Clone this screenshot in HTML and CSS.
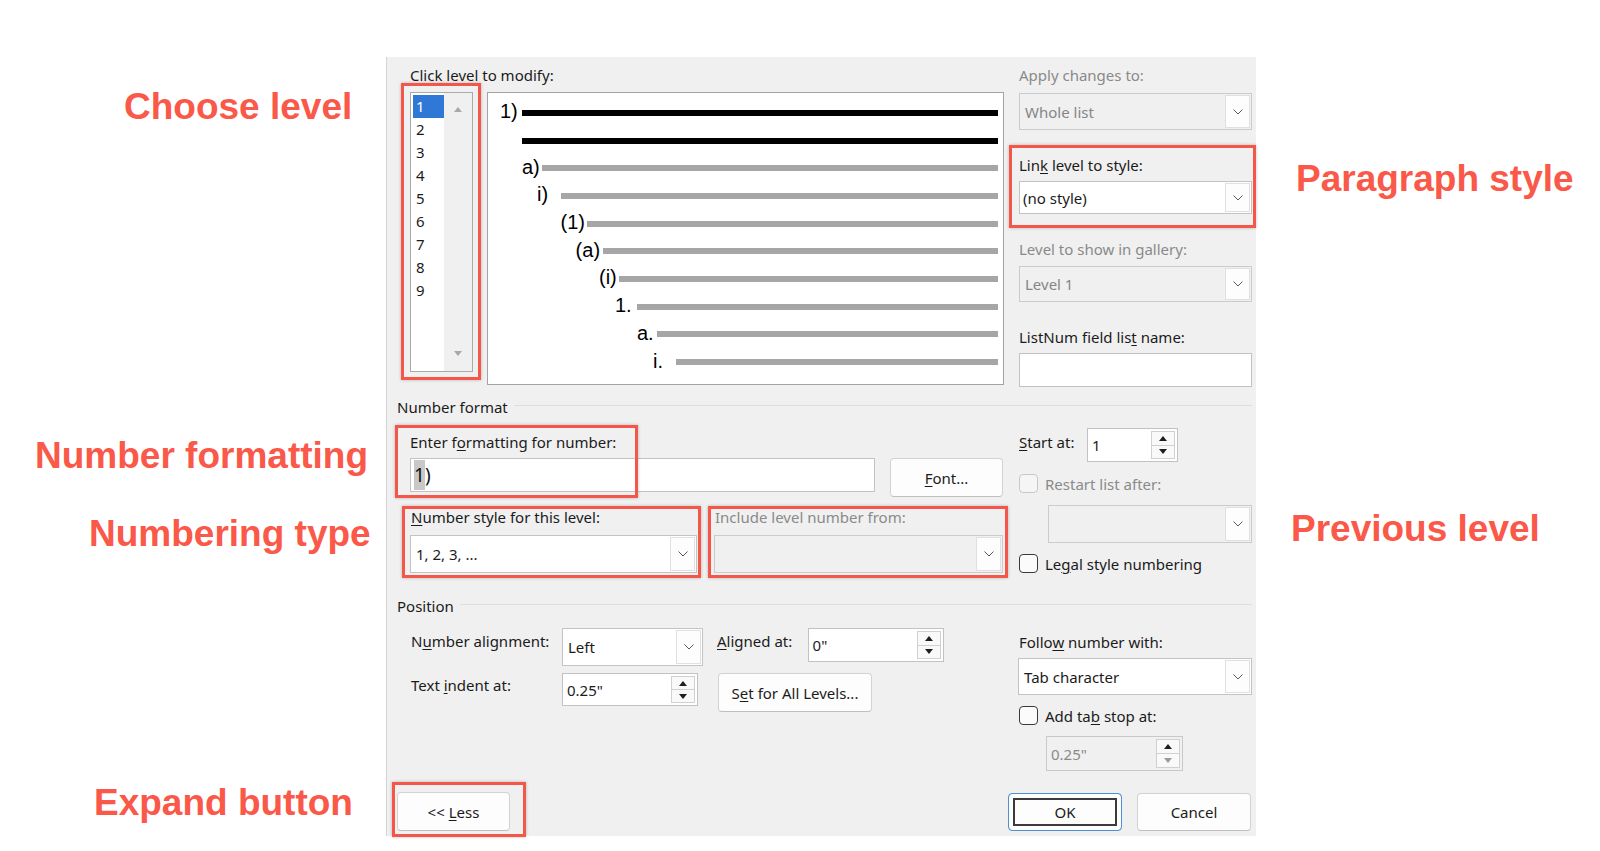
FILE: index.html
```html
<!DOCTYPE html>
<html lang="en">
<head>
<meta charset="utf-8">
<title>Define new Multilevel list</title>
<link rel="stylesheet" href="styles.css">
</head>
<body>
<div class="page">
  <div class="notes notes-left">
    <div class="note n-choose">Choose level</div>
    <div class="note n-format">Number formatting</div>
    <div class="note n-type">Numbering type</div>
    <div class="note n-expand">Expand button</div>
  </div>

  <div class="dialog">
    <section class="sec sec-top">
      <div class="col-left">
        <div class="lbl">Click le<u>v</u>el to modify:</div>
        <div class="top-row">
          <div class="levels">
            <ul class="level-items">
              <li class="sel">1</li><li>2</li><li>3</li><li>4</li><li>5</li><li>6</li><li>7</li><li>8</li><li>9</li>
            </ul>
            <div class="level-scroll">
              <svg class="tri" width="8" height="5" viewBox="0 0 8 5"><path d="M0 5 L4 0 L8 5Z" fill="#a8a8a8"/></svg>
              <svg class="tri" width="8" height="5" viewBox="0 0 8 5"><path d="M0 0 L8 0 L4 5Z" fill="#a8a8a8"/></svg>
            </div>
          </div>
          <div class="preview">
            <div class="pv-row lv0"><span class="pv-num">1)</span><span class="bar dark"></span></div>
            <div class="pv-row lv0b"><span class="bar dark"></span></div>
            <div class="pv-row lv1"><span class="pv-num">a)</span><span class="bar"></span></div>
            <div class="pv-row lv2"><span class="pv-num">i)</span><span class="bar"></span></div>
            <div class="pv-row lv3"><span class="pv-num">(1)</span><span class="bar"></span></div>
            <div class="pv-row lv4"><span class="pv-num">(a)</span><span class="bar"></span></div>
            <div class="pv-row lv5"><span class="pv-num">(i)</span><span class="bar"></span></div>
            <div class="pv-row lv6"><span class="pv-num">1.</span><span class="bar"></span></div>
            <div class="pv-row lv7"><span class="pv-num">a.</span><span class="bar"></span></div>
            <div class="pv-row lv8"><span class="pv-num">i.</span><span class="bar"></span></div>
          </div>
        </div>
      </div>
      <div class="col-right">
        <div class="lbl dis">Apply changes to:</div>
        <div class="combo disabled c-apply"><span class="val">Whole list</span><span class="drop"><svg width="10" height="6" viewBox="0 0 10 6"><path d="M0.5 0.5 L5 5 L9.5 0.5" fill="none" stroke="#5a5a5a" stroke-width="1"/></svg></span></div>
        <div class="lbl gap25">Lin<u>k</u> level to style:</div>
        <div class="combo c-link"><span class="val tight">(no style)</span><span class="drop"><svg width="10" height="6" viewBox="0 0 10 6"><path d="M0.5 0.5 L5 5 L9.5 0.5" fill="none" stroke="#5a5a5a" stroke-width="1"/></svg></span></div>
        <div class="lbl dis gap25">Level to show in gallery:</div>
        <div class="combo disabled c-gallery"><span class="val">Level 1</span><span class="drop"><svg width="10" height="6" viewBox="0 0 10 6"><path d="M0.5 0.5 L5 5 L9.5 0.5" fill="none" stroke="#5a5a5a" stroke-width="1"/></svg></span></div>
        <div class="lbl gap25">ListNum field lis<u>t</u> name:</div>
        <div class="textbox tb-listnum"></div>
      </div>
    </section>

    <div class="group-head">Number format</div>

    <section class="sec sec-num">
      <div class="col-left">
        <div class="lbl mt15">Enter f<u>o</u>rmatting for number:</div>
        <div class="fmt-row">
          <div class="textbox tb-format"><span class="selhl">1</span>)</div>
          <div class="btn btn-font"><span><u>F</u>ont...</span></div>
        </div>
        <div class="style-grid">
          <div class="lbl"><u>N</u>umber style for this level:</div>
          <div class="lbl dis">Include level number from:</div>
          <div class="combo c-style"><span class="val">1, 2, 3, ...</span><span class="drop"><svg width="10" height="6" viewBox="0 0 10 6"><path d="M0.5 0.5 L5 5 L9.5 0.5" fill="none" stroke="#5a5a5a" stroke-width="1"/></svg></span></div>
          <div class="combo disabled c-include"><span class="val"></span><span class="drop"><svg width="10" height="6" viewBox="0 0 10 6"><path d="M0.5 0.5 L5 5 L9.5 0.5" fill="none" stroke="#5a5a5a" stroke-width="1"/></svg></span></div>
        </div>
      </div>
      <div class="col-right">
        <div class="start-row">
          <div class="lbl start-lbl"><u>S</u>tart at:</div>
          <div class="spin sp-start">
            <span class="sv">1</span>
            <span class="sb"><span class="sb-up"><svg width="8" height="5" viewBox="0 0 8 5"><path d="M0 5 L4 0 L8 5Z" fill="#1e1e1e"/></svg></span><span class="sb-dn"><svg width="8" height="5" viewBox="0 0 8 5"><path d="M0 0 L8 0 L4 5Z" fill="#1e1e1e"/></svg></span></span>
          </div>
        </div>
        <div class="chk-row mt12"><span class="cb dis"></span><span class="chk-text dis">Restart list after:</span></div>
        <div class="combo disabled c-restart"><span class="val"></span><span class="drop"><svg width="10" height="6" viewBox="0 0 10 6"><path d="M0.5 0.5 L5 5 L9.5 0.5" fill="none" stroke="#5a5a5a" stroke-width="1"/></svg></span></div>
        <div class="chk-row mt11"><span class="cb"></span><span class="chk-text">Le<u>g</u>al style numbering</span></div>
      </div>
    </section>

    <div class="group-head">Position</div>

    <section class="sec sec-pos">
      <div class="col-left">
        <div class="pos-row1">
          <div class="lbl pos-lbl">N<u>u</u>mber alignment:</div>
          <div class="combo c-align"><span class="val">Left</span><span class="drop"><svg width="10" height="6" viewBox="0 0 10 6"><path d="M0.5 0.5 L5 5 L9.5 0.5" fill="none" stroke="#5a5a5a" stroke-width="1"/></svg></span></div>
          <div class="lbl aligned-lbl"><u>A</u>ligned at:</div>
          <div class="spin sp-aligned">
            <span class="sv">0"</span>
            <span class="sb"><span class="sb-up"><svg width="8" height="5" viewBox="0 0 8 5"><path d="M0 5 L4 0 L8 5Z" fill="#1e1e1e"/></svg></span><span class="sb-dn"><svg width="8" height="5" viewBox="0 0 8 5"><path d="M0 0 L8 0 L4 5Z" fill="#1e1e1e"/></svg></span></span>
          </div>
        </div>
        <div class="pos-row2">
          <div class="lbl pos-lbl2">Text <u>i</u>ndent at:</div>
          <div class="spin sp-indent">
            <span class="sv">0.25"</span>
            <span class="sb"><span class="sb-up"><svg width="8" height="5" viewBox="0 0 8 5"><path d="M0 5 L4 0 L8 5Z" fill="#1e1e1e"/></svg></span><span class="sb-dn"><svg width="8" height="5" viewBox="0 0 8 5"><path d="M0 0 L8 0 L4 5Z" fill="#1e1e1e"/></svg></span></span>
          </div>
          <div class="btn btn-setall"><span>S<u>e</u>t for All Levels...</span></div>
        </div>
      </div>
      <div class="col-right">
        <div class="lbl mt16">Follo<u>w</u> number with:</div>
        <div class="combo c-follow"><span class="val">Tab character</span><span class="drop"><svg width="10" height="6" viewBox="0 0 10 6"><path d="M0.5 0.5 L5 5 L9.5 0.5" fill="none" stroke="#5a5a5a" stroke-width="1"/></svg></span></div>
        <div class="chk-row mt11"><span class="cb"></span><span class="chk-text">Add ta<u>b</u> stop at:</span></div>
        <div class="spin disabled sp-tab">
          <span class="sv">0.25"</span>
          <span class="sb"><span class="sb-up"><svg width="8" height="5" viewBox="0 0 8 5"><path d="M0 5 L4 0 L8 5Z" fill="#1e1e1e"/></svg></span><span class="sb-dn"><svg width="8" height="5" viewBox="0 0 8 5"><path d="M0 0 L8 0 L4 5Z" fill="#9a9a9a"/></svg></span></span>
        </div>
      </div>
    </section>

    <section class="sec sec-btns">
      <div class="btn btn-less"><span>&lt;&lt; <u>L</u>ess</span></div>
      <div class="spacer"></div>
      <div class="btn btn-ok"><span>OK</span></div>
      <div class="btn btn-cancel"><span>Cancel</span></div>
    </section>
  </div>

  <div class="notes notes-right">
    <div class="note n-para">Paragraph style</div>
    <div class="note n-prev">Previous level</div>
  </div>

  <div class="callout co-levels"></div>
  <div class="callout co-link"></div>
  <div class="callout co-format"></div>
  <div class="callout co-style"></div>
  <div class="callout co-include"></div>
  <div class="callout co-less"></div>
</div>
</body>
</html>
```

FILE: styles.css
```css
* { box-sizing: border-box; }
html, body { margin: 0; padding: 0; background: #ffffff; }
body {
  width: 1600px;
  height: 851px;
  overflow: hidden;
  font-family: "Noto Sans", "Segoe UI", sans-serif;
  font-size: 15px;
  color: #1b1b1b;
}
u { text-decoration-thickness: 1px; text-underline-offset: 2px; }

.page { position: relative; display: flex; width: 1600px; height: 851px; }

/* annotations */
.notes {
  display: flex;
  flex-direction: column;
  font-family: "Liberation Sans", Arial, sans-serif;
  font-weight: bold;
  font-size: 37px;
  line-height: 40px;
  color: #fa5848;
  white-space: nowrap;
}
.notes-left { width: 386px; flex: none; }
.notes-right { flex: 1; }
.n-choose { margin: 87px 0 0 124px; }
.n-format { margin: 309px 0 0 35px; }
.n-type { margin: 38px 0 0 89px; }
.n-expand { margin: 229px 0 0 94px; }
.n-para { margin: 159px 0 0 40px; }
.n-prev { margin: 310px 0 0 35px; }

.callout {
  position: absolute;
  border: 3px solid #f4564a;
  box-shadow: 0 0 3px rgba(0, 0, 0, 0.25);
  pointer-events: none;
}
.co-levels { left: 401px; top: 83px; width: 80px; height: 297px; }
.co-link { left: 1009px; top: 145px; width: 247px; height: 83px; }
.co-format { left: 395px; top: 425px; width: 243px; height: 73px; }
.co-style { left: 402px; top: 506px; width: 299px; height: 72px; }
.co-include { left: 708px; top: 506px; width: 300px; height: 72px; }
.co-less { left: 392px; top: 782px; width: 134px; height: 55px; }

/* dialog */
.dialog {
  flex: none;
  width: 870px;
  height: 779px;
  margin-top: 57px;
  background: #f0f0f0;
  box-shadow: inset 1px 0 0 #d4d4d4;
  display: flex;
  flex-direction: column;
}
.sec { display: flex; flex: none; }
.col-left { width: 618px; flex: none; padding-left: 24px; }
.col-right { width: 233px; margin-left: 15px; flex: none; display: flex; flex-direction: column; }

.lbl { height: 20px; line-height: 20px; white-space: nowrap; }
.dis { color: #8a8a8a; }
.gap25 { margin-top: 25px; }
.mt15 { margin-top: 15px; }
.mt16 { margin-top: 16px; }
.mt12 { margin-top: 12px; }
.mt11 { margin-top: 11px; }

.sec-top { height: 340px; padding-top: 8px; }
.top-row { display: flex; align-items: flex-start; gap: 14px; margin-top: 7px; }

.levels {
  width: 63px;
  height: 280px;
  flex: none;
  display: flex;
  background: #ffffff;
  border: 1px solid #a9a9a9;
}
.level-items {
  list-style: none;
  margin: 2px 0 0 2px;
  padding: 0;
  width: 30.5px;
}
.level-items li { height: 23px; line-height: 23px; padding-left: 3px; color: #1b1b1b; }
.level-items li.sel { background: #2f78d6; color: #ffffff; }
.level-scroll {
  flex: 1;
  background: #f0f0f0;
  display: flex;
  flex-direction: column;
  align-items: center;
  justify-content: space-between;
  padding: 14px 0 15px 0;
}

.preview {
  width: 517px;
  height: 293px;
  flex: none;
  background: #ffffff;
  border: 1px solid #a3a3a3;
  padding: 6px 5px 0 0;
}
.pv-row { display: flex; align-items: center; height: 27.7px; }
.pv-num {
  flex: none;
  font-family: "Liberation Sans", Arial, sans-serif;
  font-size: 20px;
  line-height: 20px;
  color: #000;
  white-space: nowrap;
  margin-top: -3px;
}
.bar { flex: 1; height: 6px; background: #a6a6a6; }
.bar.dark { background: #000000; }
.lv0 { padding-left: 12px; } .lv0 .pv-num { width: 22px; }
.lv0b { padding-left: 34px; }
.lv1 { padding-left: 34px; } .lv1 .pv-num { width: 20px; }
.lv2 { padding-left: 49px; } .lv2 .pv-num { width: 23.5px; }
.lv3 { padding-left: 72.5px; } .lv3 .pv-num { width: 26.5px; }
.lv4 { padding-left: 87.6px; } .lv4 .pv-num { width: 27.4px; }
.lv5 { padding-left: 111px; } .lv5 .pv-num { width: 20px; }
.lv6 { padding-left: 127px; } .lv6 .pv-num { width: 22px; }
.lv7 { padding-left: 149px; } .lv7 .pv-num { width: 20px; }
.lv8 { padding-left: 165px; } .lv8 .pv-num { width: 23px; }

/* controls */
.combo {
  display: flex;
  background: #ffffff;
  border: 1px solid #c3c3c3;
  flex: none;
}
.combo .val {
  flex: 1;
  display: flex;
  align-items: center;
  padding-left: 5px;
  white-space: nowrap;
  color: #1b1b1b;
}
.combo .val.tight { padding-left: 3px; }
.combo .drop {
  width: 25px;
  margin: 1px 1px 1px 0;
  display: flex;
  align-items: center;
  justify-content: center;
  background: #fdfdfd;
  border: 1px solid #e0e0e0;
}
.combo.disabled { background: #f0f0f0; border-color: #cbcbcb; }
.combo.disabled .val { color: #868686; }

.c-apply { height: 37px; margin-top: 8px; }
.c-link { height: 33px; margin-top: 6px; }
.c-gallery { height: 36px; margin-top: 7px; }
.textbox { background: #ffffff; border: 1px solid #c2c2c2; flex: none; }
.tb-listnum { height: 34px; margin-top: 6px; }

.group-head {
  display: flex;
  align-items: center;
  height: 20px;
  padding-left: 11px;
  flex: none;
  white-space: nowrap;
}
.group-head::after {
  content: "";
  flex: 1;
  height: 1px;
  background: #dddddd;
  margin: -3px 4px 0 6px;
}

.sec-num { height: 179px; }
.fmt-row { display: flex; align-items: flex-start; margin-top: 6px; }
.tb-format {
  width: 465px;
  height: 34px;
  padding: 1px 0 0 3px;
  font-size: 19px;
  line-height: 30px;
  color: #111;
}
.selhl { background: #c8c8c8; display: inline-block; height: 30px; }
.btn {
  display: flex;
  align-items: center;
  justify-content: center;
  background: #fdfdfd;
  border: 1px solid #d2d2d2;
  border-bottom-color: #bfbfbf;
  border-radius: 4px;
  white-space: nowrap;
  color: #1b1b1b;
  flex: none;
}
.btn-font { width: 113px; height: 39px; margin-left: 15px; }

.style-grid {
  display: grid;
  grid-template-columns: 287px 289px;
  column-gap: 17px;
  row-gap: 8px;
  margin-top: 10px;
}
.style-grid .lbl { padding-left: 1px; }
.c-style, .c-include { height: 38px; }

.start-row { display: flex; align-items: flex-start; margin-top: 11px; }
.start-lbl { width: 68px; margin-top: 4px; }
.spin {
  display: flex;
  background: #ffffff;
  border: 1px solid #c2c2c2;
  flex: none;
}
.spin .sv { flex: 1; display: flex; align-items: center; padding-left: 4px; white-space: nowrap; }
.spin .sb {
  width: 24px;
  margin: 2px 2px 2px 0;
  display: flex;
  flex-direction: column;
  border: 1px solid #d0d0d0;
}
.spin .sb > span {
  flex: 1;
  display: flex;
  align-items: center;
  justify-content: center;
  background: #f9f9f9;
}
.spin .sb .sb-up { border-bottom: 1px solid #d0d0d0; }
.spin.disabled { background: #f0f0f0; border-color: #c9c9c9; }
.spin.disabled .sv { color: #8a8a8a; }
.sp-start { width: 91px; height: 34px; }

.chk-row { display: flex; align-items: center; height: 19px; }
.cb {
  width: 19px;
  height: 19px;
  flex: none;
  border: 1px solid #3a3a3a;
  border-radius: 4px;
  background: #fbfbfb;
}
.cb.dis { border-color: #c8c8c8; background: #f5f5f5; }
.chk-text { margin-left: 7px; white-space: nowrap; }
.chk-text.dis { color: #8a8a8a; }
.c-restart { width: 204px; height: 38px; margin: 12px 0 0 29px; }

.sec-pos { height: 176px; }
.pos-row1 { display: flex; align-items: flex-start; margin-top: 12px; }
.pos-lbl { width: 152px; margin-top: 3px; padding-left: 1px; }
.c-align { width: 141px; height: 38px; }
.aligned-lbl { width: 90.6px; margin: 3px 0 0 14px; }
.sp-aligned { width: 136px; height: 34px; }
.pos-row2 { display: flex; align-items: flex-start; margin-top: 7px; }
.pos-lbl2 { width: 152px; margin-top: 2px; padding-left: 1px; }
.sp-indent { width: 136px; height: 33px; }
.btn-setall { width: 154px; height: 39px; margin-left: 20px; }

.c-follow { width: 234px; height: 37px; margin: 6px 0 0 -1px; }
.sp-tab { width: 137px; height: 35px; margin: 11px 0 0 27px; }

.sec-btns { height: 39px; padding: 0 5px 0 11px; }
.spacer { flex: 1; }
.btn-less { width: 113px; height: 39px; }
.btn-ok {
  width: 114px;
  height: 38px;
  margin-top: 1px;
  border: 1px solid #4b8fd6;
  box-shadow: inset 0 0 0 4px #fdfdfd, inset 0 0 0 6px #3b3b3b;
}
.btn-cancel { width: 114px; height: 38px; margin-top: 1px; margin-left: 15px; }
```
